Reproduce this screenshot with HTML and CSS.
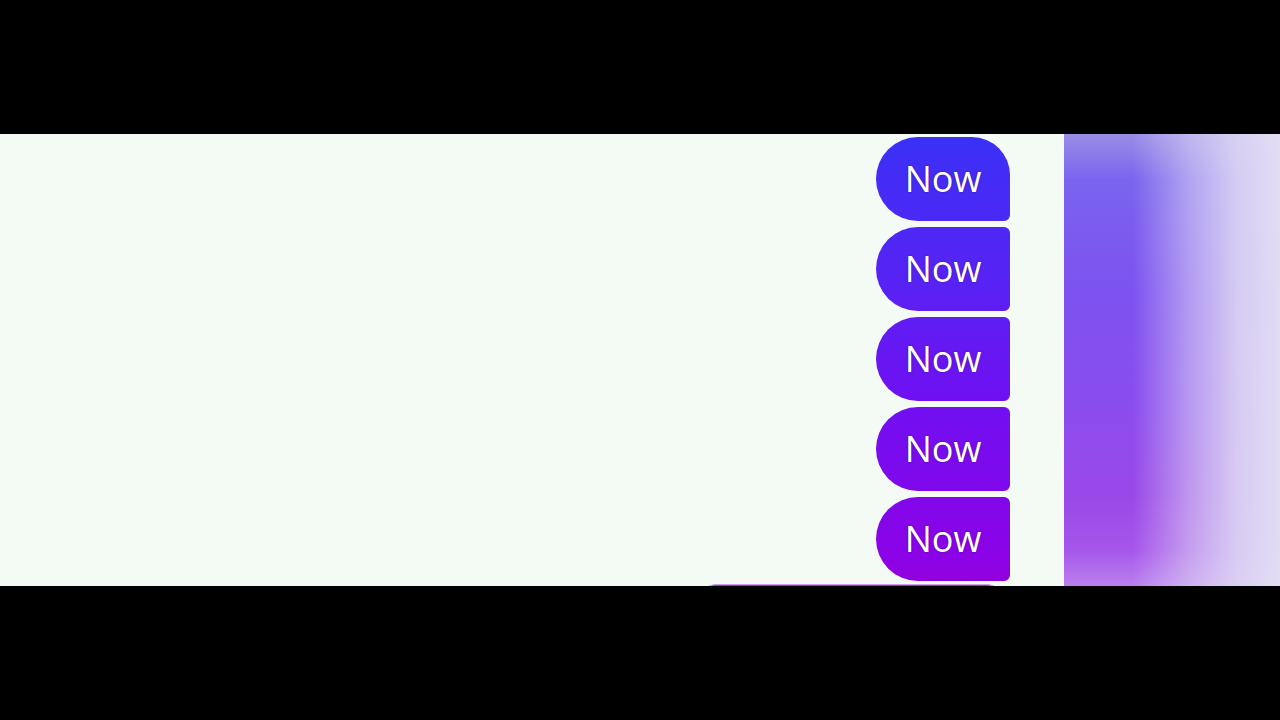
FILE: index.html
```html
<!DOCTYPE html>
<html lang="en">
<head>
<meta charset="utf-8">
<title>Now</title>
<link rel="stylesheet" href="styles.css">
</head>
<body>
<div class="frame">
  <div class="bar"></div>
  <div class="stage">
    <div class="main">
      <div class="btn first">Now</div>
      <div class="btn">Now</div>
      <div class="btn">Now</div>
      <div class="btn">Now</div>
      <div class="btn">Now</div>
      <div class="wide"></div>
    </div>
    <div class="side"></div>
  </div>
  <div class="bar"></div>
</div>
</body>
</html>
```

FILE: styles.css
```css
html, body {
  margin: 0;
  padding: 0;
  background: #000;
}
.frame {
  width: 1280px;
  height: 720px;
  display: flex;
  flex-direction: column;
}
.bar {
  height: 134px;
  background: #000;
  flex: 0 0 134px;
}
.stage {
  flex: 0 0 452px;
  display: flex;
  overflow: hidden;
}
.main {
  flex: 0 0 1064px;
  background: #f4fbf4;
  display: flex;
  flex-direction: column;
  align-items: flex-end;
  padding: 3px 54px 0 0;
  box-sizing: border-box;
  overflow: hidden;
}
.btn {
  width: 134px;
  height: 84px;
  flex: 0 0 84px;
  margin-bottom: 6px;
  border-radius: 42px 6px 6px 42px;
  background: linear-gradient(180deg, #3b30f6 137px, #5524f4 270px, #7010f2 400px, #8c02e6 560px, #9000dc 580px) fixed;
  color: #fff;
  font-family: "Open Sans", "Noto Sans", sans-serif;
  font-size: 36px;
  line-height: 84px;
  text-align: center;
  text-shadow: 0 0 2px rgba(70, 0, 100, 0.7);
}
.btn.first {
  border-radius: 42px 38px 6px 42px;
}
.wide {
  width: 309px;
  height: 40px;
  flex: 0 0 40px;
  margin: -3px 4px 0 0;
  border-radius: 20px 20px 0 0;
  background: #9a28de;
  border-top: 1px solid #d79af0;
}
.side {
  flex: 1;
  background:
    linear-gradient(90deg, rgba(228, 222, 246, 0) 0%, rgba(228, 222, 246, 0) 32%, rgba(222, 216, 244, 0.55) 58%, rgba(222, 216, 244, 0.9) 80%, rgba(226, 220, 244, 1) 100%),
    linear-gradient(180deg, #9a8ee6 0%, #7a64ee 10%, #7d52f0 35%, #8a4cee 60%, #9a48e8 80%, #a656ea 92%, #bb80ee 100%);
}
```
